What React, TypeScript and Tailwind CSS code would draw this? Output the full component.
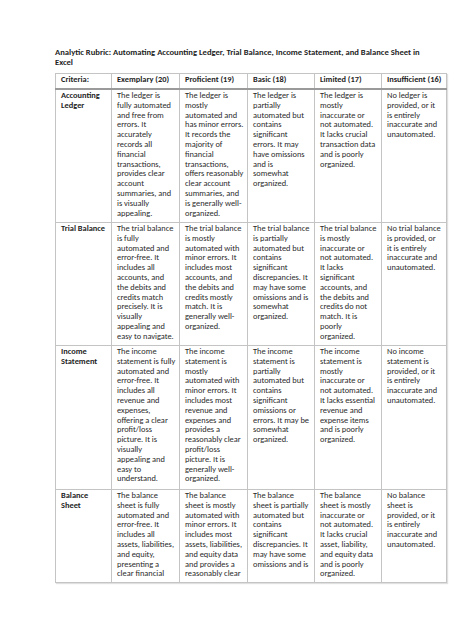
import React from "react";

const levels = ["Exemplary (20)", "Proficient (19)", "Basic (18)", "Limited (17)", "Insufficient (16)"];

type Row = { name: string; h: string; cells: string[] };

const rows: Row[] = [
  {
    name: "Accounting\nLedger",
    h: "h-[132px]",
    cells: [
      "The ledger is\nfully automated\nand free from\nerrors. It\naccurately\nrecords all\nfinancial\ntransactions,\nprovides clear\naccount\nsummaries, and\nis visually\nappealing.",
      "The ledger is\nmostly\nautomated and\nhas minor errors.\nIt records the\nmajority of\nfinancial\ntransactions,\noffers reasonably\nclear account\nsummaries, and\nis generally well-\norganized.",
      "The ledger is\npartially\nautomated but\ncontains\nsignificant\nerrors. It may\nhave omissions\nand is\nsomewhat\norganized.",
      "The ledger is\nmostly\ninaccurate or\nnot automated.\nIt lacks crucial\ntransaction data\nand is poorly\norganized.",
      "No ledger is\nprovided, or it\nis entirely\ninaccurate and\nunautomated.",
    ],
  },
  {
    name: "Trial Balance",
    h: "h-[122px]",
    cells: [
      "The trial balance\nis fully\nautomated and\nerror-free. It\nincludes all\naccounts, and\nthe debits and\ncredits match\nprecisely. It is\nvisually\nappealing and\neasy to navigate.",
      "The trial balance\nis mostly\nautomated with\nminor errors. It\nincludes most\naccounts, and\nthe debits and\ncredits mostly\nmatch. It is\ngenerally well-\norganized.",
      "The trial balance\nis partially\nautomated but\ncontains\nsignificant\ndiscrepancies. It\nmay have some\nomissions and is\nsomewhat\norganized.",
      "The trial balance\nis mostly\ninaccurate or\nnot automated.\nIt lacks\nsignificant\naccounts, and\nthe debits and\ncredits do not\nmatch. It is\npoorly\norganized.",
      "No trial balance\nis provided, or\nit is entirely\ninaccurate and\nunautomated.",
    ],
  },
  {
    name: "Income\nStatement",
    h: "h-[143px]",
    cells: [
      "The income\nstatement is fully\nautomated and\nerror-free. It\nincludes all\nrevenue and\nexpenses,\noffering a clear\nprofit/loss\npicture. It is\nvisually\nappealing and\neasy to\nunderstand.",
      "The income\nstatement is\nmostly\nautomated with\nminor errors. It\nincludes most\nrevenue and\nexpenses and\nprovides a\nreasonably clear\nprofit/loss\npicture. It is\ngenerally well-\norganized.",
      "The income\nstatement is\npartially\nautomated but\ncontains\nsignificant\nomissions or\nerrors. It may be\nsomewhat\norganized.",
      "The income\nstatement is\nmostly\ninaccurate or\nnot automated.\nIt lacks essential\nrevenue and\nexpense items\nand is poorly\norganized.",
      "No income\nstatement is\nprovided, or it\nis entirely\ninaccurate and\nunautomated.",
    ],
  },
  {
    name: "Balance\nSheet",
    h: "h-[92px]",
    cells: [
      "The balance\nsheet is fully\nautomated and\nerror-free. It\nincludes all\nassets, liabilities,\nand equity,\npresenting a\nclear financial",
      "The balance\nsheet is mostly\nautomated with\nminor errors. It\nincludes most\nassets, liabilities,\nand equity data\nand provides a\nreasonably clear",
      "The balance\nsheet is partially\nautomated but\ncontains\nsignificant\ndiscrepancies. It\nmay have some\nomissions and is",
      "The balance\nsheet is mostly\ninaccurate or\nnot automated.\nIt lacks crucial\nasset, liability,\nand equity data\nand is poorly\norganized.",
      "No balance\nsheet is\nprovided, or it\nis entirely\ninaccurate and\nunautomated.",
    ],
  },
];

const cell = "border border-[#c4c4c4] align-top p-0";

export default function App() {
  return (
    <div className="w-[474px] h-[632px] overflow-hidden bg-white text-[#2a2a2a] font-['Carlito','Lato',sans-serif]">
      <div className="pl-[55px] pt-[47px]">
        <h1 className="text-[8.6px] leading-[10px] font-bold text-[#1e1e1e]">
          Analytic Rubric: Automating Accounting Ledger, Trial Balance, Income Statement, and Balance Sheet in
          <br />
          Excel
        </h1>
        <table className="mt-[6px] table-fixed border-collapse w-[391px] text-[8.4px] leading-[9.8px] shadow-[1px_1px_1px_rgba(0,0,0,0.12)]">
          <colgroup>
            <col className="w-[56px]" />
            <col className="w-[68px]" />
            <col className="w-[68px]" />
            <col className="w-[67px]" />
            <col className="w-[67px]" />
            <col className="w-[65px]" />
          </colgroup>
          <thead>
            <tr>
              {["Criteria:", ...levels].map((l) => (
                <th key={l} className="border border-[#c4c4c4] border-b-2 border-b-[#9a9a9a] p-0 text-left align-top font-bold text-[#1e1e1e]">
                  <div className="h-[14px] pl-[5px] pt-[1px] whitespace-nowrap">{l}</div>
                </th>
              ))}
            </tr>
          </thead>
          <tbody>
            {rows.map((r) => (
              <tr key={r.name}>
                <td className={cell}>
                  <div className={`${r.h} overflow-hidden pl-[5px] pt-[1px] font-bold whitespace-pre-line text-[#1e1e1e]`}>
                    {r.name}
                  </div>
                </td>
                {r.cells.map((c, i) => (
                  <td key={i} className={cell}>
                    <div className={`${r.h} overflow-hidden pl-[5px] pt-[1px] whitespace-pre`}>{c}</div>
                  </td>
                ))}
              </tr>
            ))}
          </tbody>
        </table>
      </div>
    </div>
  );
}
